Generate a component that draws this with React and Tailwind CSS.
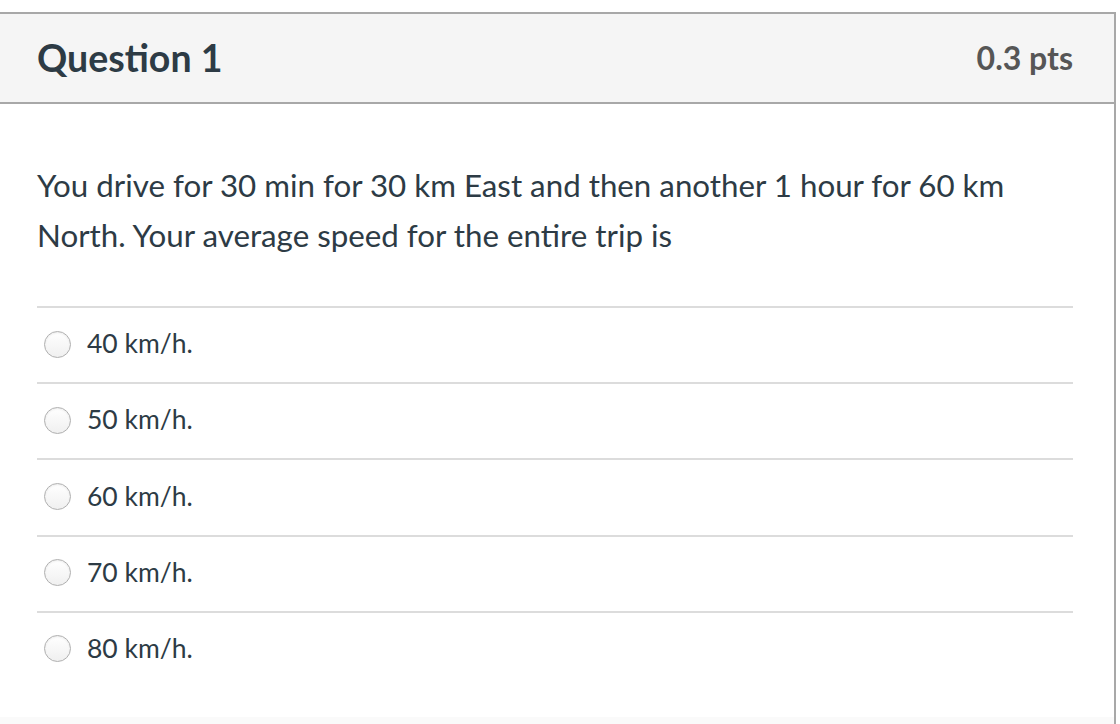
import React from "react";

const ANSWERS = ["40 km/h.", "50 km/h.", "60 km/h.", "70 km/h.", "80 km/h."];

function Radio() {
  return (
    <span className="block h-[27px] w-[27px] shrink-0 rounded-full border border-[#b0b0b0] bg-gradient-to-b from-white to-[#f0f0f0] shadow-[inset_0_1px_2px_rgba(0,0,0,0.08)]" />
  );
}

export default function App() {
  return (
    <div
      className="min-h-[724px] bg-white pt-3"
      style={{ fontFamily: "Lato, 'Open Sans', sans-serif" }}
    >
      <div className="w-[1116px] border-2 border-l-0 border-[#a8a8a8]">
        <header className="flex h-[90px] items-center justify-between border-b-2 border-[#a8a8a8] bg-[#f5f5f5] pl-[37px] pr-[41px]">
          <h2 className="text-[37.5px] font-bold text-[#2d3b45]">Question 1</h2>
          <div className="text-[32px] font-bold text-[#565656]">0.3 pts</div>
        </header>

        <div className="pl-[37px] pr-[41px] pt-[56px]">
          <p className="text-[31.3px] leading-[50px] text-[#2d3b45]">
            You drive for 30 min for 30 km East and then another 1 hour for 60 km North. Your
            average speed for the entire trip is
          </p>

          <ul className="mt-[46px]">
            {ANSWERS.map((a) => (
              <li
                key={a}
                className="flex h-[76.2px] items-center gap-[16px] border-t-2 border-[#dcdcdc] pb-[2px] pl-[7px]"
              >
                <Radio />
                <span className="text-[26.5px] text-[#2d3b45]">{a}</span>
              </li>
            ))}
          </ul>
        </div>

        <div className="h-[30px]" />
        <div className="h-[20px] bg-[#fafafa]" />
      </div>
    </div>
  );
}
